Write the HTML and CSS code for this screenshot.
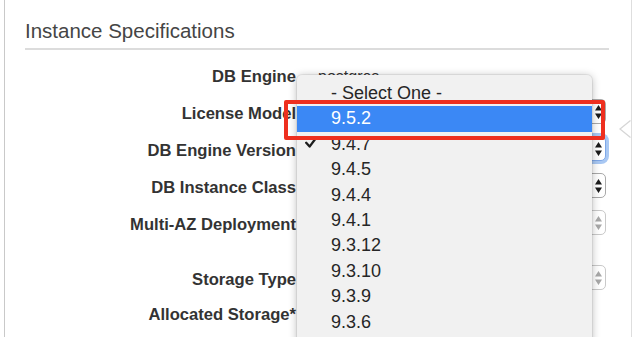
FILE: index.html
```html
<!DOCTYPE html>
<html>
<head>
<meta charset="utf-8">
<link rel="stylesheet" href="styles.css">
</head>
<body>
<div class="panel">
  <h2 class="title">Instance Specifications</h2>
  <div class="form">
    <div class="row">
      <div class="label">DB Engine</div>
      <div class="control"><span class="static">postgres</span></div>
    </div>
    <div class="row">
      <div class="label">License Model</div>
      <div class="control"><div class="select"><svg class="arrows" viewBox="0 0 7 16" width="7" height="16"><path d="M0 6.5 L3.5 1 L7 6.5Z M0 9.5 L3.5 15 L7 9.5Z"/></svg></div></div>
    </div>
    <div class="row">
      <div class="label">DB Engine Version</div>
      <div class="control"><div class="select focused"><svg class="arrows" viewBox="0 0 7 16" width="7" height="16"><path d="M0 6.5 L3.5 1 L7 6.5Z M0 9.5 L3.5 15 L7 9.5Z"/></svg></div></div>
    </div>
    <div class="row">
      <div class="label">DB Instance Class</div>
      <div class="control"><div class="select"><svg class="arrows" viewBox="0 0 7 16" width="7" height="16"><path d="M0 6.5 L3.5 1 L7 6.5Z M0 9.5 L3.5 15 L7 9.5Z"/></svg></div></div>
    </div>
    <div class="row spaced">
      <div class="label">Multi-AZ Deployment</div>
      <div class="control"><div class="select disabled"><svg class="arrows" viewBox="0 0 7 16" width="7" height="16"><path d="M0 6.5 L3.5 1 L7 6.5Z M0 9.5 L3.5 15 L7 9.5Z"/></svg></div></div>
    </div>
    <div class="row short">
      <div class="label">Storage Type</div>
      <div class="control"><div class="select disabled"><svg class="arrows" viewBox="0 0 7 16" width="7" height="16"><path d="M0 6.5 L3.5 1 L7 6.5Z M0 9.5 L3.5 15 L7 9.5Z"/></svg></div></div>
    </div>
    <div class="row short">
      <div class="label">Allocated Storage*</div>
      <div class="control"></div>
    </div>
  </div>

  <div class="menu">
    <div class="item"><span class="check"></span>- Select One -</div>
    <div class="item active"><span class="check"></span>9.5.2</div>
    <div class="item"><span class="check"><svg viewBox="0 0 12 11" width="12" height="11"><path d="M1.2 5.8 L4.6 9.6 L11 1" fill="none" stroke="#1e1e1e" stroke-width="2.3" stroke-linecap="round" stroke-linejoin="round"/></svg></span>9.4.7</div>
    <div class="item"><span class="check"></span>9.4.5</div>
    <div class="item"><span class="check"></span>9.4.4</div>
    <div class="item"><span class="check"></span>9.4.1</div>
    <div class="item"><span class="check"></span>9.3.12</div>
    <div class="item"><span class="check"></span>9.3.10</div>
    <div class="item"><span class="check"></span>9.3.9</div>
    <div class="item"><span class="check"></span>9.3.6</div>
  </div>

  <div class="highlight-box"></div>

  <svg class="chevron" viewBox="0 0 12 18" width="12" height="18"><path d="M11.5 0.5 L1 9 L11.5 17.5" fill="#fff" stroke="#d6d6d6" stroke-width="1.3"/></svg>
</div>
</body>
</html>
```

FILE: styles.css
```css
html, body {
  margin: 0;
  padding: 0;
  background: #fff;
  height: 337px;
  overflow: hidden;
}

body {
  font-family: "Liberation Sans", Arial, Helvetica, sans-serif;
}

.panel {
  position: relative;
  box-sizing: border-box;
  margin-left: 4px;
  width: 628px;
  height: 337px;
  padding-top: 19px;
  border-left: 1px solid #c9c9c9;
  border-right: 1px solid #dedede;
  overflow: hidden;
}

.title {
  margin: 0 22px 0 20px;
  padding-bottom: 5px;
  border-bottom: 2px solid #dcdcdc;
  font-size: 20.5px;
  line-height: 24px;
  font-weight: normal;
  color: #454545;
}

.form {
  display: flex;
  flex-direction: column;
  padding-top: 8px;
}

.row {
  display: flex;
  align-items: center;
  height: 37px;
}

.row.spaced {
  margin-bottom: 19px;
}

.row.short {
  height: 35px;
}

.label {
  flex: 0 0 291px;
  text-align: right;
  font-weight: bold;
  font-size: 16.6px;
  color: #333;
  white-space: nowrap;
}

.control {
  flex: 1;
  display: flex;
  align-items: center;
  align-self: stretch;
  padding-left: 14px;
}

.static {
  align-self: flex-start;
  padding-top: 10px;
  padding-left: 8px;
  font-size: 16px;
  line-height: 18px;
  color: #333;
}

.select {
  box-sizing: border-box;
  width: 296px;
  height: 25px;
  margin-bottom: 4px;
  border: 1px solid #a9a9a9;
  border-radius: 5px;
  background: #fff;
  display: flex;
  align-items: center;
  justify-content: flex-end;
  padding-right: 3px;
}

.select .arrows path {
  fill: #1c1c1c;
}

.select.focused {
  border-color: #7ea8e8;
  box-shadow: 0 0 0 3px #a9c8f3;
}

.select.disabled {
  border-color: #c9c9c9;
}

.select.disabled .arrows path {
  fill: #a8a8a8;
}

.menu {
  position: absolute;
  left: 292px;
  top: 75px;
  width: 295px;
  height: 280px;
  padding-top: 6px;
  background: #f1f1f1;
  border-radius: 5px 5px 0 0;
  box-shadow: 0 1px 9px rgba(0, 0, 0, 0.28), 0 0 0 1px rgba(0, 0, 0, 0.06);
  font-size: 18px;
  color: #262626;
}

.item {
  display: flex;
  align-items: center;
  height: 25.4px;
  line-height: 25.4px;
  white-space: nowrap;
}

.item.active {
  background: #3b88f5;
  color: #fff;
}

.check {
  flex: 0 0 34px;
  display: flex;
  align-items: center;
  padding-left: 8px;
  box-sizing: border-box;
  height: 100%;
  margin-top: -3px;
}

.highlight-box {
  position: absolute;
  left: 279px;
  top: 99.5px;
  width: 321px;
  height: 40px;
  box-sizing: border-box;
  border: 4.5px solid #ee2f1f;
  border-radius: 2px;
}

.chevron {
  position: absolute;
  left: 614px;
  top: 120px;
}
```
